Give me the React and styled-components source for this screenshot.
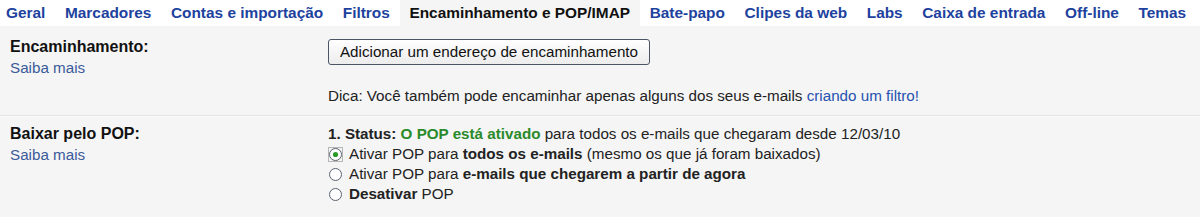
import React from "react";
import styled, { createGlobalStyle } from "styled-components";

const tabs = [
  "Geral",
  "Marcadores",
  "Contas e importação",
  "Filtros",
  "Encaminhamento e POP/IMAP",
  "Bate-papo",
  "Clipes da web",
  "Labs",
  "Caixa de entrada",
  "Off-line",
  "Temas",
];

const ACTIVE = "Encaminhamento e POP/IMAP";

const App = () => {
  return (
    <>
      <GlobalStyle />
      <Page>
        <TabBar>
          {tabs.map((t) => (
            <Tab key={t} $active={t === ACTIVE}>
              {t}
            </Tab>
          ))}
        </TabBar>
        <Content>
          <Section $first>
            <LabelCol>
              <Label>Encaminhamento:</Label>
              <HelpLink>Saiba mais</HelpLink>
            </LabelCol>
            <ValueCol $pad="3px">
              <Button>Adicionar um endereço de encaminhamento</Button>
              <Tip>
                Dica: Você também pode encaminhar apenas alguns dos seus e-mails{" "}
                <Link>criando um filtro!</Link>
              </Tip>
            </ValueCol>
          </Section>
          <Section>
            <LabelCol>
              <Label>Baixar pelo POP:</Label>
              <HelpLink>Saiba mais</HelpLink>
            </LabelCol>
            <ValueCol $pad="0">
              <Status>
                <b>1. Status: </b>
                <Green>O POP está ativado</Green> para todos os e-mails que
                chegaram desde 12/03/10
              </Status>
              <Option>
                <Radio checked />
                <span>
                  Ativar POP para <b>todos os e-mails</b> (mesmo os que já foram
                  baixados)
                </span>
              </Option>
              <Option>
                <Radio />
                <span>
                  Ativar POP para <b>e-mails que chegarem a partir de agora</b>
                </span>
              </Option>
              <Option>
                <Radio />
                <span>
                  <b>Desativar</b> POP
                </span>
              </Option>
            </ValueCol>
          </Section>
        </Content>
      </Page>
    </>
  );
};

const Radio = ({ checked }) => (
  <RadioBox>
    <svg width="15" height="15" viewBox="0 0 15 15">
      {checked && (
        <rect
          x="0.5"
          y="0.5"
          width="14"
          height="14"
          fill="none"
          stroke="#777"
          strokeWidth="1"
          strokeDasharray="1 1"
        />
      )}
      <circle cx="7.5" cy="7.5" r="6" fill="#fff" stroke="#5a6270" strokeWidth="1" />
      {checked && <circle cx="7.5" cy="7.5" r="2.6" fill="#2a9a2a" />}
    </svg>
  </RadioBox>
);

const GlobalStyle = createGlobalStyle`
  body {
    margin: 0;
    font-family: "Liberation Sans", Arial, sans-serif;
    background: #f5f5f5;
  }
`;

const Page = styled.div`
  width: 1200px;
  height: 217px;
  overflow: hidden;
  background: #f5f5f5;
`;

const TabBar = styled.div`
  display: flex;
  background: #fff;
  height: 26px;
`;

const Tab = styled.div`
  display: flex;
  align-items: center;
  padding: 0 9.8px;
  font-size: 15.4px;
  font-weight: bold;
  white-space: nowrap;
  color: ${(p) => (p.$active ? "#111" : "#1d429e")};
  background: ${(p) => (p.$active ? "#f5f5f5" : "transparent")};
  &:first-child {
    padding-left: 6px;
  }
`;

const Content = styled.div`
  display: flex;
  flex-direction: column;
`;

const Section = styled.div`
  display: flex;
  box-sizing: border-box;
  height: ${(p) => (p.$first ? "90px" : "101px")};
  padding-top: ${(p) => (p.$first ? "11px" : "8px")};
  border-bottom: ${(p) => (p.$first ? "1px solid #e2e2e2" : "none")};
  box-shadow: ${(p) => (p.$first ? "0 1px 0 #fcfcfc" : "none")};
`;

const LabelCol = styled.div`
  width: 318px;
  padding-left: 10px;
  display: flex;
  flex-direction: column;
  line-height: 20.5px;
`;

const Label = styled.div`
  font-weight: bold;
  font-size: 16px;
  color: #111;
`;

const HelpLink = styled.div`
  font-size: 15.2px;
  color: #3b5b9a;
`;

const ValueCol = styled.div`
  display: flex;
  flex-direction: column;
  align-items: flex-start;
  font-size: 15.2px;
  color: #222;
  line-height: 20px;
  padding-top: ${(p) => p.$pad};
`;

const Button = styled.div`
  box-sizing: border-box;
  height: 26px;
  width: 322px;
  margin-top: -1px;
  display: flex;
  align-items: center;
  justify-content: center;
  border: 1px solid #4a5566;
  border-radius: 3px;
  background: linear-gradient(#ffffff, #ececec);
  font-size: 15.2px;
  color: #111;
`;

const Tip = styled.div`
  margin-top: 21px;
`;

const Link = styled.span`
  color: #2652b0;
`;

const Status = styled.div`
  white-space: nowrap;
`;

const Green = styled.b`
  color: #2a8a2a;
`;

const Option = styled.div`
  display: flex;
  align-items: center;
  gap: 6px;
  white-space: nowrap;
`;

const RadioBox = styled.span`
  display: flex;
  width: 15px;
  height: 15px;
`;

export default App;
